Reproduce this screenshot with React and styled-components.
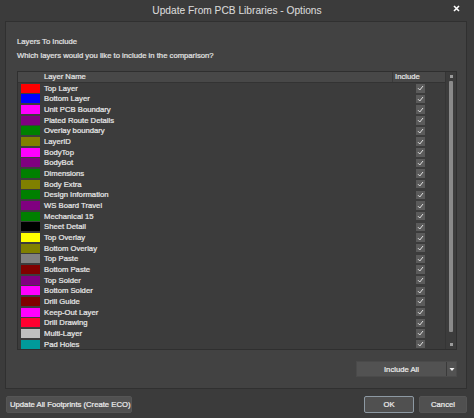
import React from "react";
import styled, { createGlobalStyle } from "styled-components";

const Global = createGlobalStyle`
  html, body { margin: 0; padding: 0; }
  body {
    width: 474px;
    height: 418px;
    overflow: hidden;
    background: #3b3b3b;
    font-family: "Liberation Sans", Arial, sans-serif;
    color: #e4e4e4;
    -webkit-text-stroke: 0.22px currentColor;
  }
`;

const Window = styled.div`
  width: 474px;
  height: 418px;
  display: flex;
  flex-direction: column;
  background: #3b3b3b;
`;

const TitleBar = styled.div`
  height: 21px;
  display: grid;
  grid-template-columns: 40px 1fr 40px;
  align-items: center;
`;

const Title = styled.div`
  text-align: center;
  font-size: 10.2px;
  color: #d8d8d8;
  -webkit-text-stroke: 0.1px currentColor;
`;

const Close = styled.div`
  justify-self: end;
  margin-right: 14px;
  margin-top: -5px;
  display: flex;
`;

const Panel = styled.div`
  margin: 0 7px 0 5px;
  height: 368px;
  box-sizing: border-box;
  border: 1px solid #303030;
  background: #424242;
  padding: 15px 9px 0 11px;
  display: flex;
  flex-direction: column;
`;

const Label = styled.div`
  font-size: 7.7px;
  line-height: 10px;
  color: #e2e2e2;
  margin-bottom: ${(p) => p.$mb || 0}px;
`;

const Table = styled.div`
  width: 440px;
  box-sizing: border-box;
  border: 1px solid #2f2f2f;
  background: #3c3c3c;
  display: grid;
  grid-template-columns: 1fr 11px;
`;

const Main = styled.div`
  display: flex;
  flex-direction: column;
`;

const Header = styled.div`
  height: 11px;
  box-sizing: border-box;
  display: grid;
  grid-template-columns: 1fr 52px;
  background: #484848;
  border-bottom: 1px solid #333;
  font-size: 7.7px;
  line-height: 10px;
  color: #e6e6e6;
`;

const HeadCell = styled.div`
  padding-left: ${(p) => p.$pl}px;
  border-right: ${(p) => (p.$sep ? "1px solid #3a3a3a" : "none")};
`;

const Row = styled.div`
  height: 10.67px;
  display: grid;
  grid-template-columns: 1fr 52px;
  align-items: center;
  font-size: 7.7px;
  color: #e8e8e8;
`;

const NameCell = styled.div`
  display: flex;
  align-items: center;
  gap: 4px;
  padding-left: 3px;
  white-space: nowrap;
`;

const Swatch = styled.div`
  width: 19px;
  height: 9px;
  background: ${(p) => p.$c};
`;

const CheckCell = styled.div`
  display: flex;
  justify-content: center;
  padding-left: 3px;
`;

const Check = styled.div`
  width: 9px;
  height: 8.5px;
  background: #5b5b5b;
  display: flex;
  align-items: center;
  justify-content: center;
`;

const ScrollBar = styled.div`
  display: flex;
  flex-direction: column;
  align-items: center;
  padding: 3px 0 3px;
  background: #3c3c3c;
  border-left: 1px solid #353535;
`;

const Thumb = styled.div`
  width: 4px;
  flex: 1;
  margin: 3px 0 11px;
  background: #8a8a8a;
  border-radius: 1px;
`;

const Arrow = styled.div`
  width: 3px;
  height: 3px;
  background: #9a9a9a;
`;

const ActionRow = styled.div`
  display: flex;
  justify-content: flex-end;
  width: 440px;
  margin-top: 11px;
`;

const SplitButton = styled.div`
  display: flex;
  height: 16px;
  background: #525252;
  border: 1px solid #4a4a4a;
  box-sizing: border-box;
`;

const SplitMain = styled.div`
  width: 89px;
  display: flex;
  align-items: center;
  justify-content: center;
  font-size: 7.7px;
  color: #ececec;
  border-right: 1px solid #3a3a3a;
`;

const SplitDrop = styled.div`
  width: 9px;
  display: flex;
  align-items: center;
  justify-content: center;
`;

const Footer = styled.div`
  display: flex;
  align-items: center;
  padding: 7px 7px 0 6px;
  gap: 5px;
`;

const Button = styled.div`
  height: 17px;
  width: ${(p) => p.$w}px;
  box-sizing: border-box;
  display: flex;
  align-items: center;
  justify-content: ${(p) => (p.$left ? "flex-start" : "center")};
  padding-left: ${(p) => (p.$left ? 3 : 0)}px;
  background: #505050;
  border: 1px solid ${(p) => (p.$focus ? "#8d99a3" : "#555")};
  border-radius: 2px;
  font-size: 7.7px;
  color: #ececec;
  white-space: nowrap;
  margin-left: ${(p) => (p.$push ? "auto" : "0")};
`;

const layers = [
  ["Top Layer", "#ff0000"],
  ["Bottom Layer", "#0000ff"],
  ["Unit PCB Boundary", "#ff00ff"],
  ["Plated Route Details", "#800080"],
  ["Overlay boundary", "#008000"],
  ["LayerID", "#808000"],
  ["BodyTop", "#ff00ff"],
  ["BodyBot", "#800080"],
  ["Dimensions", "#008000"],
  ["Body Extra", "#808000"],
  ["Design Information", "#008000"],
  ["WS Board Travel", "#800080"],
  ["Mechanical 15", "#008000"],
  ["Sheet Detail", "#000000"],
  ["Top Overlay", "#ffff00"],
  ["Bottom Overlay", "#808000"],
  ["Top Paste", "#808080"],
  ["Bottom Paste", "#800000"],
  ["Top Solder", "#800080"],
  ["Bottom Solder", "#ff00ff"],
  ["Drill Guide", "#800000"],
  ["Keep-Out Layer", "#ff00ff"],
  ["Drill Drawing", "#ff0030"],
  ["Multi-Layer", "#c0c0c0"],
  ["Pad Holes", "#009a9a"],
];

const CheckMark = () => (
  <svg width="7" height="6" viewBox="0 0 7 6">
    <path d="M1 3.2 L2.8 5 L6 1" fill="none" stroke="#e0e0e0" strokeWidth="1" />
  </svg>
);

export default function App() {
  return (
    <Window>
      <Global />
      <TitleBar>
        <div />
        <Title>Update From PCB Libraries - Options</Title>
        <Close>
          <svg width="7" height="7" viewBox="0 0 7 7">
            <path d="M1 1 L6 6 M6 1 L1 6" stroke="#ffffff" strokeWidth="1.6" />
          </svg>
        </Close>
      </TitleBar>
      <Panel>
        <Label $mb={4}>Layers To Include</Label>
        <Label $mb={10}>Which layers would you like to include in the comparison?</Label>
        <Table>
          <Main>
            <Header>
              <HeadCell $pl={26} $sep>Layer Name</HeadCell>
              <HeadCell $pl={2}>Include</HeadCell>
            </Header>
            {layers.map(([name, color]) => (
              <Row key={name}>
                <NameCell>
                  <Swatch $c={color} />
                  {name}
                </NameCell>
                <CheckCell>
                  <Check>
                    <CheckMark />
                  </Check>
                </CheckCell>
              </Row>
            ))}
          </Main>
          <ScrollBar>
            <Arrow />
            <Thumb />
            <Arrow />
          </ScrollBar>
        </Table>
        <ActionRow>
          <SplitButton>
            <SplitMain>Include All</SplitMain>
            <SplitDrop>
              <svg width="6" height="5" viewBox="0 0 6 5">
                <path d="M0.5 1 H5.5 L3 4 Z" fill="#f0f0f0" />
              </svg>
            </SplitDrop>
          </SplitButton>
        </ActionRow>
      </Panel>
      <Footer>
        <Button $w={126} $left>Update All Footprints (Create ECO)</Button>
        <Button $w={50} $focus $push>OK</Button>
        <Button $w={48}>Cancel</Button>
      </Footer>
    </Window>
  );
}
